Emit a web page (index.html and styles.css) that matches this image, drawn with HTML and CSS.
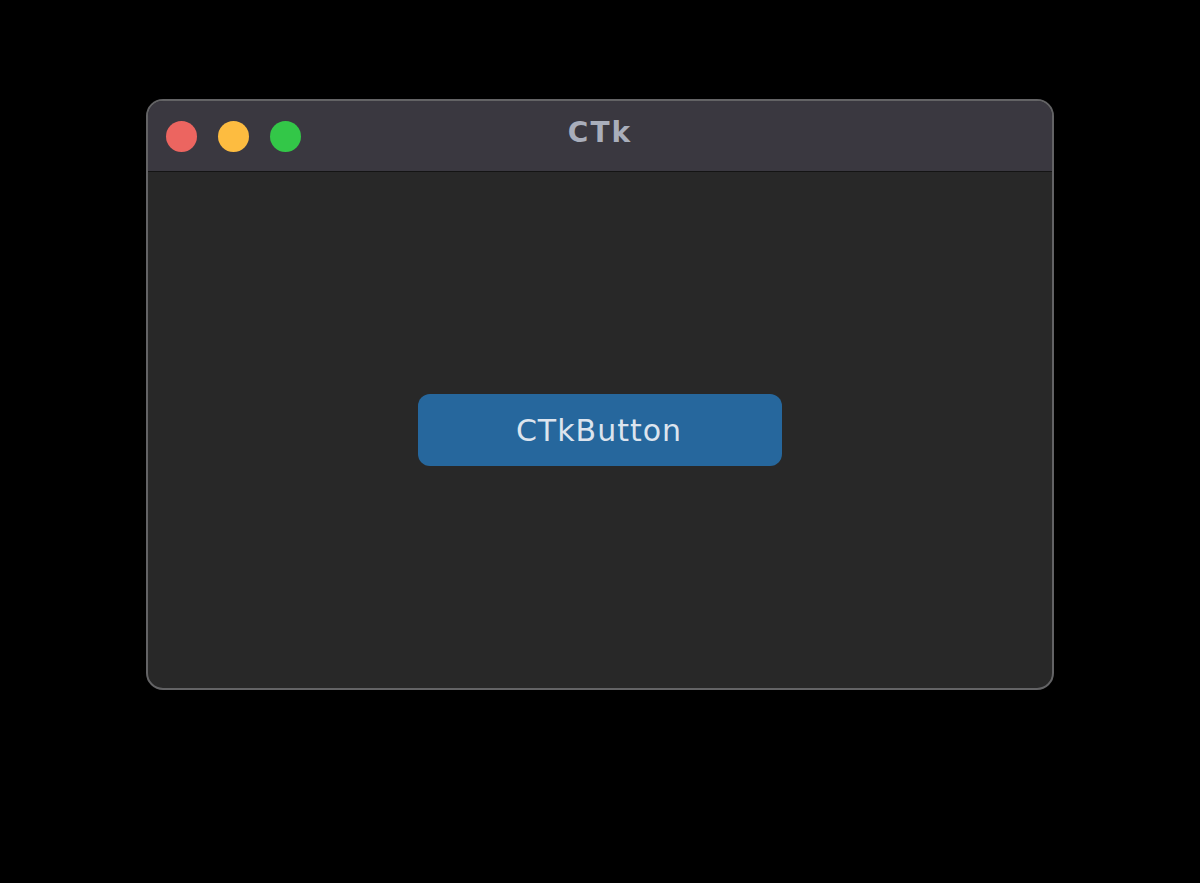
FILE: index.html
```html
<!DOCTYPE html>
<html>
<head>
<meta charset="utf-8">
<link rel="stylesheet" href="styles.css">
</head>
<body>
<div class="stage">
  <div class="window">
    <div class="titlebar">
      <div class="lights">
        <span class="light red"></span>
        <span class="light yellow"></span>
        <span class="light green"></span>
      </div>
      <div class="title">CTk</div>
    </div>
    <div class="content">
      <button class="ctk-button">CTkButton</button>
    </div>
  </div>
</div>
</body>
</html>
```
FILE: styles.css
```css
html, body {
  margin: 0;
  padding: 0;
  background: #000;
  width: 1200px;
  height: 883px;
  overflow: hidden;
}
.stage {
  padding-top: 99px;
  padding-left: 146px;
}
.window {
  width: 908px;
  height: 591px;
  box-sizing: border-box;
  border: 2px solid #636365;
  border-radius: 17px;
  overflow: hidden;
  display: flex;
  flex-direction: column;
  background: #282828;
}
.titlebar {
  position: relative;
  height: 70px;
  flex: none;
  background: #3a3840;
  border-bottom: 1.5px solid #141414;
  display: flex;
  align-items: center;
}
.lights {
  display: flex;
  gap: 21px;
  padding-left: 18px;
}
.light {
  width: 31px;
  height: 31px;
  border-radius: 50%;
  display: block;
}
.red { background: #ec6560; }
.yellow { background: #fdbc40; }
.green { background: #33c748; }
.title {
  position: absolute;
  left: 0;
  right: 0;
  top: 0;
  bottom: 0;
  padding-bottom: 8px;
  padding-left: 0;
  display: flex;
  align-items: center;
  justify-content: center;
  font-family: "DejaVu Sans", sans-serif;
  font-weight: 700;
  font-size: 28px;
  letter-spacing: 2px;
  color: #a9aebb;
}
.content {
  flex: 1;
  display: flex;
  align-items: center;
  justify-content: center;
}
.ctk-button {
  width: 364px;
  height: 72px;
  border: none;
  border-radius: 12px;
  background: #26679d;
  color: #dce4ee;
  font-family: "DejaVu Sans", sans-serif;
  font-size: 30px;
  letter-spacing: 1px;
  padding: 0 2px 0 0;
}
```
